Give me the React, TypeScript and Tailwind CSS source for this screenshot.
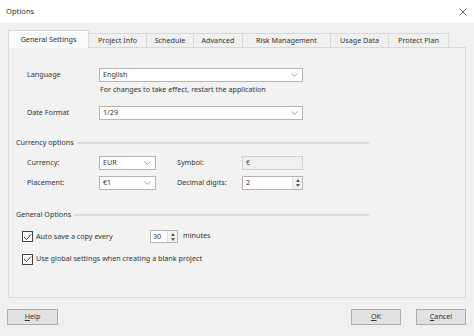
import React from "react";

const font = "font-['Noto_Sans','Liberation_Sans',sans-serif]";

function Chevron() {
  return (
    <svg width="7" height="4" viewBox="0 0 7 4" className="shrink-0">
      <path d="M0.5 0.5 L3.5 3.3 L6.5 0.5" fill="none" stroke="#8a8a8a" strokeWidth="0.8" />
    </svg>
  );
}

function Combo({ value, width }: { value: string; width: string }) {
  return (
    <div className={`${width} flex h-[14px] items-center justify-between border border-[#b4b4b4] bg-white pl-[3px] pr-[4px]`}>
      <span>{value}</span>
      <Chevron />
    </div>
  );
}

function SpinButtons() {
  return (
    <div className="flex h-full w-[10px] flex-col items-center justify-center gap-[2px] border-l border-[#e2e2e2] bg-[#f3f3f3]">
      <svg width="4" height="3" viewBox="0 0 4 3">
        <path d="M0 3 L2 0 L4 3 Z" fill="#555" />
      </svg>
      <svg width="4" height="3" viewBox="0 0 4 3">
        <path d="M0 0 L2 3 L4 0 Z" fill="#555" />
      </svg>
    </div>
  );
}

function Check() {
  return (
    <div className="flex h-[11px] w-[11px] items-center justify-center border border-[#444] bg-white">
      <svg width="9" height="8" viewBox="0 0 9 8">
        <path d="M1 4 L3.5 6.5 L8 1.5" fill="none" stroke="#333" strokeWidth="1" />
      </svg>
    </div>
  );
}

function GroupHeader({ label }: { label: string }) {
  return (
    <div className="flex h-[10px] w-[360px] items-center pl-[7px]">
      <span>{label}</span>
      <div className="ml-[3px] h-[2px] flex-1 bg-[#dcdcdc]" />
    </div>
  );
}

const tabs = [
  { label: "Project Info", w: "w-[59px]" },
  { label: "Schedule", w: "w-[48px]" },
  { label: "Advanced", w: "w-[50px]" },
  { label: "Risk Management", w: "w-[89px]" },
  { label: "Usage Data", w: "w-[59px]" },
  { label: "Protect Plan", w: "w-[61px]" },
];

export default function App() {
  return (
    <div className={`${font} flex h-[336px] w-[474px] flex-col bg-[#f0f0f0] text-[7.2px] leading-none text-[#333]`}>
      {/* Title bar */}
      <div className="flex h-[23px] items-center justify-between bg-white pl-[6px] pr-[7px]">
        <span className="text-[7.6px]">Options</span>
        <svg width="8" height="8" viewBox="0 0 8 8">
          <path d="M0.5 0.5 L7.5 7.5 M7.5 0.5 L0.5 7.5" stroke="#444" strokeWidth="0.8" />
        </svg>
      </div>

      {/* Tabs */}
      <div className="mx-[8px] mt-[6px] flex h-[18px] items-end">
        <div className="relative z-10 -mb-px flex h-[18px] w-[81px] items-center justify-center border border-b-0 border-[#d9d9d9] bg-[#f9f9f9]">
          General Settings
        </div>
        {tabs.map((t) => (
          <div
            key={t.label}
            className={`${t.w} -ml-px flex h-[14px] items-center justify-center border border-b-0 border-[#d9d9d9] bg-[#f0f0f0]`}
          >
            {t.label}
          </div>
        ))}
      </div>

      {/* Panel */}
      <div className="mx-[8px] flex h-[251px] flex-col border border-[#d9d9d9] bg-[#f2f2f2]">
        <div className="mt-[20px] flex h-[14px] items-center pl-[18px]">
          <span className="w-[72px]">Language</span>
          <Combo value="English" width="w-[204px]" />
        </div>
        <div className="mt-[3px] flex h-[9px] items-center pl-[91px]">
          For changes to take effect, restart the application
        </div>
        <div className="mt-[12px] flex h-[14px] items-center pl-[18px]">
          <span className="w-[72px]">Date Format</span>
          <Combo value="1/29" width="w-[204px]" />
        </div>

        <div className="mt-[18px]">
          <GroupHeader label="Currency options" />
        </div>
        <div className="mt-[8px] flex h-[14px] items-center pl-[18px]">
          <span className="w-[72px]">Currency:</span>
          <Combo value="EUR" width="w-[57px]" />
          <span className="ml-[21px] w-[65px]">Symbol:</span>
          <div className="flex h-[14px] w-[61px] items-center border border-[#cfcfcf] bg-[#efefef] pl-[3px] text-[#555]">
            €
          </div>
        </div>
        <div className="mt-[6px] flex h-[14px] items-center pl-[18px]">
          <span className="w-[72px]">Placement:</span>
          <Combo value="€1" width="w-[57px]" />
          <span className="ml-[21px] w-[65px]">Decimal digits:</span>
          <div className="flex h-[14px] w-[61px] items-center border border-[#b4b4b4] bg-white">
            <span className="flex-1 pl-[3px]">2</span>
            <SpinButtons />
          </div>
        </div>

        <div className="mt-[20px]">
          <GroupHeader label="General Options" />
        </div>
        <div className="mt-[10px] flex h-[13px] items-center pl-[13px]">
          <Check />
          <span className="ml-[3px] w-[114px]">Auto save a copy every</span>
          <div className="flex h-[13px] w-[28px] items-center border border-[#b4b4b4] bg-white">
            <span className="flex-1 pl-[2px]">30</span>
            <SpinButtons />
          </div>
          <span className="ml-[5px] -mt-[2px]">minutes</span>
        </div>
        <div className="mt-[10px] flex h-[12px] items-center pl-[13px]">
          <Check />
          <span className="ml-[3px]">Use global settings when creating a blank project</span>
        </div>
      </div>

      {/* Buttons */}
      <div className="mt-[11px] flex h-[16px] items-center pl-[7px] pr-[8px]">
        <button className="flex h-[16px] w-[51px] items-center justify-center border border-[#adadad] bg-[#e1e1e1]">
          <span><span className="underline">H</span>elp</span>
        </button>
        <div className="flex-1" />
        <button className="flex h-[16px] w-[50px] items-center justify-center border border-[#adadad] bg-[#e1e1e1]">
          <span><span className="underline">O</span>K</span>
        </button>
        <button className="ml-[15px] flex h-[16px] w-[50px] items-center justify-center border border-[#adadad] bg-[#e1e1e1]">
          <span><span className="underline">C</span>ancel</span>
        </button>
      </div>
    </div>
  );
}
